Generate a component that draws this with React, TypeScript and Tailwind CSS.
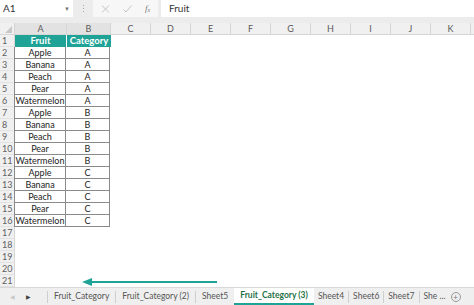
import React from 'react';

const font = { fontFamily: 'Lato, "Noto Sans", sans-serif' };

const cols = ['C', 'D', 'E', 'F', 'G', 'H', 'I', 'J', 'K'];

const data: [string, string][] = [
  ['Apple', 'A'],
  ['Banana', 'A'],
  ['Peach', 'A'],
  ['Pear', 'A'],
  ['Watermelon', 'A'],
  ['Apple', 'B'],
  ['Banana', 'B'],
  ['Peach', 'B'],
  ['Pear', 'B'],
  ['Watermelon', 'B'],
  ['Apple', 'C'],
  ['Banana', 'C'],
  ['Peach', 'C'],
  ['Pear', 'C'],
  ['Watermelon', 'C'],
];

const tabs = ['Fruit_Category', 'Fruit_Category (2)', 'Sheet5'];
const tabsAfter = ['Sheet4', 'Sheet6', 'Sheet7', 'She ...'];

function RowNum({ n }: { n: number }) {
  return (
    <div className="w-[15px] shrink-0 h-full bg-[#f0f0f0] border-r border-[#d6d6d6] border-b border-b-[#e2e2e2] text-[9px] leading-[12px] text-[#606060] pl-[2px]">
      {n}
    </div>
  );
}

export default function App() {
  return (
    <div className="relative w-[474px] h-[305px] overflow-hidden bg-white select-none" style={font}>
      {/* formula bar */}
      <div className="flex h-[23px] bg-[#ececec] items-start">
        <div className="flex items-center justify-between w-[73px] h-[17px] bg-white pl-[3px] pr-[3px] text-[10px] text-[#333]">
          <span>A1</span>
          <span className="text-[6px] text-[#777]">▼</span>
        </div>
        <div className="w-[20px] h-[17px] flex items-center justify-center">
          <div className="flex flex-col gap-[2px]">
            <span className="block w-[1px] h-[1px] bg-[#aaa]" />
            <span className="block w-[1px] h-[1px] bg-[#aaa]" />
            <span className="block w-[1px] h-[1px] bg-[#aaa]" />
          </div>
        </div>
        <div className="flex items-center gap-[13px] w-[65px] h-[17px] bg-[#f7f7f7] pl-[8px]">
          <svg width="9" height="8" viewBox="0 0 9 8">
            <path d="M1 0.5L8 7.5M8 0.5L1 7.5" stroke="#c4c4c4" strokeWidth="1" />
          </svg>
          <svg width="9" height="8" viewBox="0 0 9 8">
            <path d="M0.5 4.5L3 7L8.5 0.5" stroke="#c4c4c4" strokeWidth="1" fill="none" />
          </svg>
          <span className="text-[9px] italic text-[#777]" style={{ fontFamily: '"Liberation Serif", serif' }}>
            f<sub className="text-[6px]">x</sub>
          </span>
        </div>
        <div className="ml-[3px] flex-1 h-[17px] bg-white pl-[8px] text-[10px] leading-[17px] text-[#333]">
          Fruit
        </div>
      </div>

      {/* column header */}
      <div className="flex h-[12px] bg-[#f0f0f0] border-b border-[#d6d6d6] text-[9px] leading-[11px] text-[#5a5a5a]">
        <div className="relative w-[15px] shrink-0 border-r border-[#d6d6d6]">
          <div className="absolute right-[2px] bottom-[1px] w-0 h-0 border-l-[7px] border-l-transparent border-b-[7px] border-b-[#c8c8c8]" />
        </div>
        <div className="w-[52px] shrink-0 text-center bg-[#e2e2e2] border-r border-[#d6d6d6]">A</div>
        <div className="w-[44px] shrink-0 text-center bg-[#e2e2e2] border-r border-[#d6d6d6]">B</div>
        {cols.map((c) => (
          <div key={c} className="w-[40px] shrink-0 text-center border-r border-[#d6d6d6]">
            {c}
          </div>
        ))}
        <div className="flex-1" />
      </div>

      {/* row 1 */}
      <div className="flex h-[12px]">
        <RowNum n={1} />
        <div className="w-[52px] shrink-0 bg-[#1fa397] text-white font-bold text-center text-[9.5px] leading-[12px] border-r border-white">
          Fruit
        </div>
        <div className="w-[44px] shrink-0 bg-[#1fa397] text-white font-bold text-center text-[9.5px] leading-[12px]">
          Category
        </div>
        <div className="flex-1" />
      </div>

      {data.map(([fruit, cat], i) => (
        <div key={i} className="flex h-[12px]">
          <RowNum n={i + 2} />
          <div className="w-[52px] shrink-0 border-l border-b border-r border-[#8a8a8a] text-center text-[9px] leading-[11px] text-[#222] -ml-[1px] whitespace-nowrap">
            {fruit}
          </div>
          <div className="w-[44px] shrink-0 border-b border-r border-[#8a8a8a] text-center text-[9px] leading-[11px] text-[#222]">
            {cat}
          </div>
          <div className="flex-1" />
        </div>
      ))}

      {[17, 18, 19, 20, 21].map((n) => (
        <div key={n} className="flex h-[12px]">
          <RowNum n={n} />
          <div className="flex-1" />
        </div>
      ))}

      {/* sheet tabs */}
      <div className="flex items-center h-[18px] bg-[#efefef] border-t border-[#d8d8d8] text-[8.5px] text-[#555]">
        <div className="flex items-center w-[47px] shrink-0 pl-[10px] gap-[11px] text-[6px]">
          <span className="text-[#c8c8c8]">◀</span>
          <span className="text-[#444]">▶</span>
        </div>
        {tabs.map((t) => (
          <div key={t} className="flex shrink-0 items-center h-[12px] px-[6px] border-l border-[#cfcfcf] whitespace-nowrap">
            {t}
          </div>
        ))}
        <div className="flex shrink-0 items-center h-full px-[6px] bg-white border-b-2 border-[#1fa397] text-[#1f7146] font-bold whitespace-nowrap">
          Fruit_Category (3)
        </div>
        {tabsAfter.map((t, i) => (
          <div
            key={t}
            className={`flex shrink-0 items-center h-[12px] px-[4px] whitespace-nowrap ${i > 0 ? 'border-l border-[#cfcfcf]' : ''}`}
          >
            {t}
          </div>
        ))}
        <div className="ml-[1px] w-[10px] h-[10px] shrink-0 rounded-full border border-[#999] flex items-center justify-center text-[8px] leading-none text-[#777]">
          +
        </div>
      </div>

      {/* annotation arrow */}
      <svg className="absolute left-[80px] top-[277px]" width="140" height="10" viewBox="0 0 140 10">
        <path d="M10 5H137" stroke="#1fa397" strokeWidth="2" />
        <path d="M2 5L12 1V9Z" fill="#1fa397" />
      </svg>
    </div>
  );
}
